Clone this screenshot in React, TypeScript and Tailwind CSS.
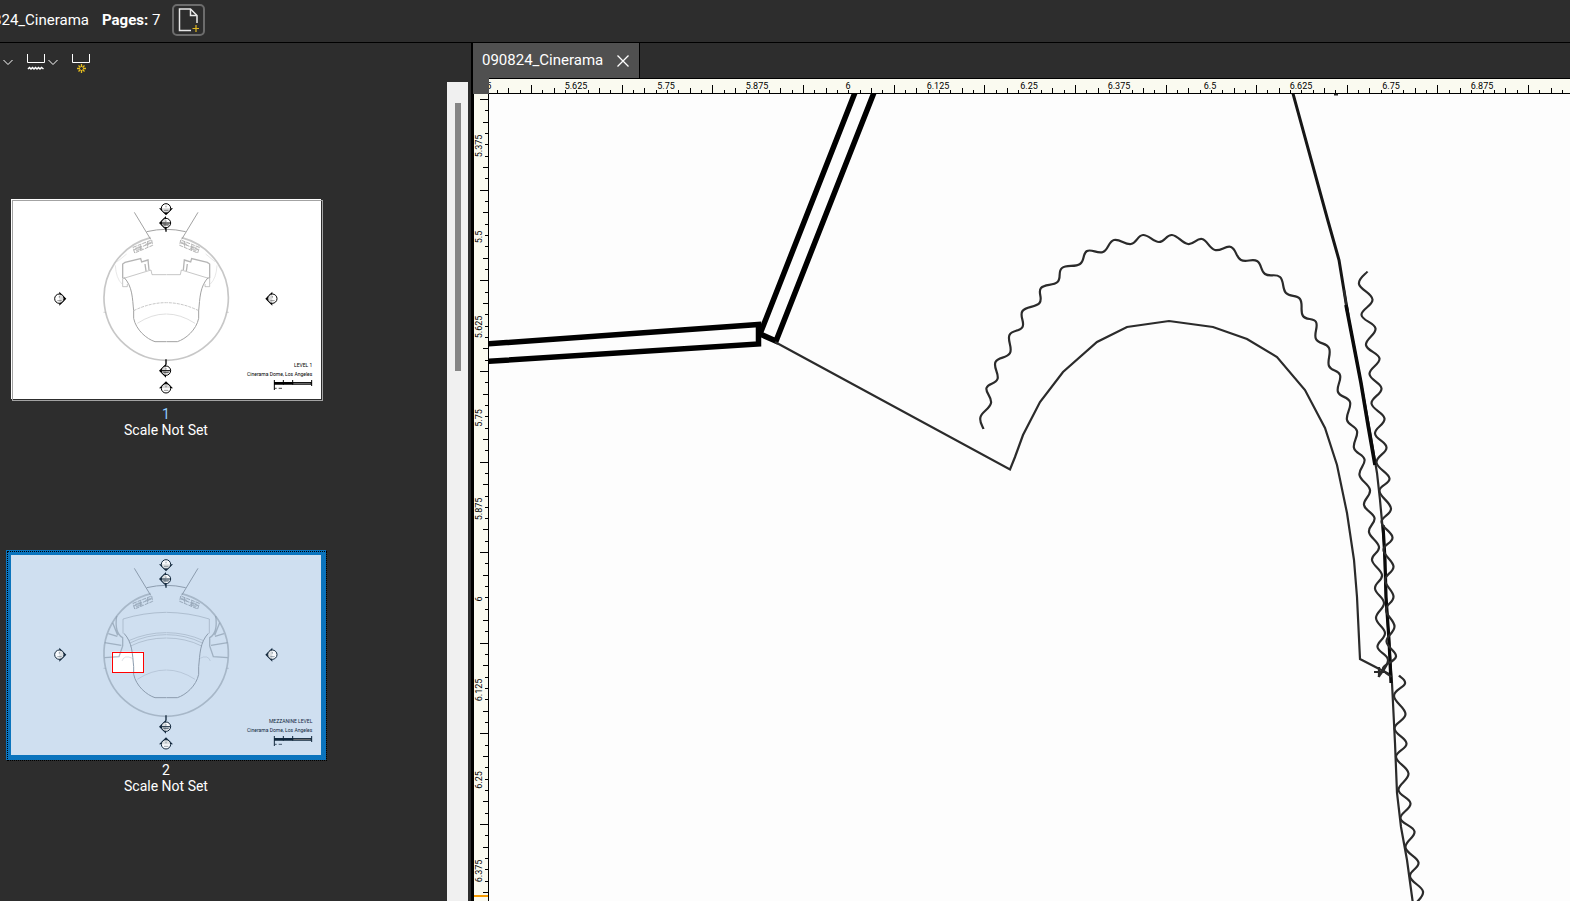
import type { ReactNode } from "react";

type Point = [number, number];

const LABEL_STEP = 90.63;

const arcWave: Point[] = [
	[983.5, 429], [980.5, 417], [991, 403], [986.5, 388], [997.5, 379], [995.5, 362], [1010, 353], [1009.5, 335],
	[1022.5, 327], [1022.5, 311], [1039.5, 303], [1041, 288], [1057.5, 282], [1062, 268], [1080, 264], [1087, 251],
	[1103, 252], [1114, 240], [1131, 244], [1143, 235], [1159, 242], [1172, 235], [1188, 244], [1202, 239],
	[1215, 250], [1231, 247], [1241, 260], [1257, 261], [1265, 274], [1280, 277], [1286, 293], [1300, 299],
	[1303, 316], [1316, 322], [1316, 339], [1329, 348], [1329, 366], [1340, 375], [1338, 392], [1350, 402],
	[1347, 420], [1357, 431], [1354, 448], [1364.5, 459.5], [1359.5, 475], [1370, 490], [1364, 505], [1374.5, 518],
	[1369, 532], [1379, 547], [1372, 560], [1382, 575], [1375, 588.5], [1384, 603], [1376, 618], [1385, 633],
	[1377.5, 647], [1388, 660], [1378.5, 677],
];

const sideWave: Point[] = [
	[1367.5, 271.5], [1359, 284], [1372.5, 299.5], [1361.5, 315], [1375.5, 328.5], [1366, 345], [1379.5, 358.5],
	[1369.5, 374], [1381.5, 388.5], [1371.5, 403.5], [1384.5, 418.5], [1375, 433.5], [1386.5, 447.5], [1376.5, 462.5],
	[1389.5, 478.5], [1379.5, 491], [1391, 508.5], [1381.5, 522], [1392.5, 537.5], [1383.5, 550], [1393.5, 566.5],
	[1385, 580], [1393.5, 596.5], [1386, 610], [1394.5, 626.5], [1386.5, 641.5], [1396, 656.5], [1383, 668],
	[1391.5, 677],
];

const lowerWave: Point[] = [
	[1399, 675.5], [1405, 683.5], [1394, 696], [1405.5, 714], [1394.5, 728.5], [1406.5, 743.5], [1396, 757],
	[1408.5, 773.5], [1398.5, 790], [1410.5, 803.5], [1400.5, 818.5], [1414.5, 831.5], [1405.5, 847.5],
	[1418.5, 862.5], [1410, 876.5], [1423, 891.5], [1415, 904],
];

function smoothPath(points: Point[]) {
	return points.reduce((d, [x, y], i) => {
		if (i === 0) return `M${x} ${y}`;
		const [px, py] = points[i - 1];
		const [bx, by] = points[i - 2] ?? points[i - 1];
		const [nx, ny] = points[i + 1] ?? points[i];
		const c1 = `${px + (x - bx) / 5} ${py + (y - by) / 5}`;
		const c2 = `${x - (nx - px) / 5} ${y - (ny - py) / 5}`;
		return `${d}C${c1} ${c2} ${x} ${y}`;
	}, "");
}

function tickLength(index: number) {
	if (index % 8 === 0) return 8;
	return index % 4 === 2 ? 5 : 3;
}

function ticks(origin: number, count: number) {
	return Array.from({ length: count }, (_, i) => ({
		pos: Math.floor(origin + (i * LABEL_STEP) / 8),
		length: tickLength(i),
	}));
}

function HorizontalRuler() {
	return (
		<div className="h-4 min-w-0 flex-1 overflow-hidden border-black border-y bg-[#fafaf0]">
			<svg className="h-full w-full" aria-hidden="true">
				{ticks(-48, 240).map(({ pos, length }) => (
					<rect key={pos} x={pos} y={14 - length} width="1" height={length} shapeRendering="crispEdges" />
				))}
				<g className="text-[9px]" textAnchor="middle">
					{Array.from({ length: 12 }, (_, i) => (
						<text key={i} x={Math.round(i * LABEL_STEP) - 4} y="10">
							{5.5 + i * 0.125}
						</text>
					))}
				</g>
			</svg>
		</div>
	);
}

function VerticalRuler() {
	return (
		<div className="w-[15px] flex-none overflow-hidden border-black border-r bg-[#fafaf0]">
			<svg className="h-full w-full" aria-hidden="true">
				{ticks(5.5, 120).map(({ pos, length }) => (
					<rect key={pos} x={14 - length} y={pos} width={length} height="1" shapeRendering="crispEdges" />
				))}
				<g className="text-[9px]" textAnchor="middle">
					{Array.from({ length: 9 }, (_, i) => (
						<text key={i} transform={`translate(8 ${Math.round(i * LABEL_STEP) + 52}) rotate(-90)`}>
							{5.375 + i * 0.125}
						</text>
					))}
				</g>
				<rect y="801" width="14" height="2" fill="#f59a00" />
			</svg>
		</div>
	);
}

function FloorPlan() {
	return (
		<svg
			className="block h-full w-full"
			viewBox="489 94 1081 807"
			preserveAspectRatio="xMinYMin slice"
			fill="none"
			stroke="#2b2b2b"
			strokeWidth="2.2"
			role="img"
			aria-label="Mezzanine floor plan"
		>
			<g stroke="#000" strokeWidth="5.5">
				<path d="M486 344L758.500 324.500V344L486 361.500" />
				<path d="M856 90L760 334L776 341L875 90" />
			</g>
			<path d="M775 342L1010 469.500L1015 457L1023 435L1040 402L1063 372L1097 342L1127 327L1169 321L1213 327L1247 339L1277 357L1305 390L1325 428L1337 465L1347 513L1354 560L1357 597L1360 659L1389 674" />
			{/* dome wall */}
			<path d="M1292 90L1328 221L1339 260L1348 315" stroke="#161616" strokeWidth="3" />
			<path d="M1344 290L1348 315L1361 383L1371 437L1377 473L1380 500L1384 543L1386 597L1388 627L1392 683L1395 743L1397 793L1401 827L1407 860L1413 904" />
			<path d="M1346 305L1361 383L1368 425L1375 465" stroke="#0a0a0a" strokeWidth="3.6" />
			<path d="M1383 525L1385 560L1386 597L1389 640L1391 683" stroke="#0a0a0a" strokeWidth="3.2" />
			<path d="M1379 667V677M1374 672H1384M1334 94.500H1338" />
			<path d={smoothPath(arcWave)} />
			<path d={smoothPath(sideWave)} />
			<path d={smoothPath(lowerWave)} />
		</svg>
	);
}

function SectionMark({ x, y, rotate, split }: { x: number; y: number; rotate: number; split?: boolean }) {
	return (
		<g transform={`translate(${x} ${y})`} stroke="currentColor">
			<path d="M-21 0L0 -21L21 0Z" fill="currentColor" stroke="none" transform={`rotate(${rotate})`} />
			<circle r="14" className="fill-white" strokeWidth="3" fillOpacity=".85" />
			<path d="M-6 6H7M0 -8V-3" strokeWidth="3" opacity=".4" />
			{split && <path d="M-14 0H14" strokeWidth="3" />}
			{split && <path d="M-10 5H10" strokeWidth="5" opacity=".4" />}
		</g>
	);
}

function HalfPlan({ mezzanine }: { mezzanine?: boolean }) {
	return (
		<>
			<path d="M403 67L452 148M440 125Q470 118 498 118" strokeWidth="3" />
			<path d="M452 143A187 187 0 0 0 498.500 511" strokeWidth="5" opacity=".6" />
			<g strokeWidth="3" opacity=".8">
				<path d="M399 172L455 150L458 166L404 189ZM401 180L456 158" strokeDasharray="12 3" />
				<path d="M405 176L424 169M408 182L427 175M436 164L455 157" strokeWidth="5" opacity=".7" />
				<path d="M422 166V180M443 156V170" />
			</g>
			<path d="M372 262C398 290 397 325 401 362V385C408 420 440 447 465 455H498" strokeWidth="3" />
			<path d="M412 400Q455 372 498 372M310 367h8" opacity=".35" strokeWidth="3" />
			{mezzanine ? (
				<>
					<path d="M498 199Q430 200 369 219V262" opacity=".5" strokeWidth="3" />
					<path d="M350 210C345 245 350 265 368 275V300L357 332L314 335M314 290L364 298M325 263L352 271M338 230L353 268" strokeWidth="4" opacity=".7" />
					<path d="M386 284Q440 260 498 260M390 291Q440 266 498 266M392 300Q440 276 498 276" opacity=".45" strokeWidth="3" />
					<path d="M366 345Q372 325 398 337" opacity=".3" strokeWidth="3" />
				</>
			) : (
				<>
					<path d="M368 265V222L375 217L422 206L425 216L444 210L447 240M435 222L438 243" strokeWidth="4" opacity=".8" />
					<path d="M368 266L453 240L456 254H498M368 266V290H382V282" strokeWidth="3" opacity=".6" />
					<path d="M346 226Q348 265 366 282M352 215L380 192" strokeWidth="3" opacity=".25" />
					<path d="M401 362Q450 338 498 338" strokeWidth="3" strokeDasharray="9 3" opacity=".6" />
				</>
			)}
		</>
	);
}

function PagePlan({ title, mezzanine }: { title: string; mezzanine?: boolean }) {
	return (
		<svg className="block h-[200px] w-[310px]" viewBox="33 27 930 600" fill="none" aria-hidden="true">
			{mezzanine && <rect x="335" y="317" width="96" height="62" fill="#fff" />}
			<g stroke={mezzanine ? "#8c9cae" : "#a2a2a2"}>
				<HalfPlan mezzanine={mezzanine} />
				<g transform="translate(997 0) scale(-1 1)">
					<HalfPlan mezzanine={mezzanine} />
				</g>
			</g>
			{mezzanine && <rect x="337.500" y="319.500" width="93" height="60" stroke="#f00" strokeWidth="3" />}
			<g className={mezzanine ? "text-[#12283d]" : "text-black"}>
				<path d="M498 112V125M498 508V524" stroke="currentColor" strokeWidth="4" />
				<SectionMark x={498} y={55} rotate={180} />
				<SectionMark x={498} y={99} rotate={270} split />
				<SectionMark x={178} y={326} rotate={90} />
				<SectionMark x={817} y={326} rotate={270} />
				<SectionMark x={498} y={542} rotate={270} split />
				<SectionMark x={498} y={595} rotate={0} />
				<g fill="currentColor" fontSize="15" textAnchor="end">
					<text x="937" y="531">
						{title}
					</text>
					<text x="937" y="558">
						Cinerama Dome, Los Angeles
					</text>
				</g>
				<path d="M822 580H935" stroke="currentColor" strokeWidth="8" />
				<path d="M823 570V600M850 570V584M878 570V584M935 570V588" stroke="currentColor" strokeWidth="3" />
				<path d="M824 595H830M836 595H846" stroke="currentColor" strokeWidth="4" opacity=".6" />
				<path d="M880 580H932" stroke="#777" strokeWidth="3" />
			</g>
		</svg>
	);
}

function Thumbnail({ page, selected, children }: { page: number; selected?: boolean; children: ReactNode }) {
	return (
		<li className="flex flex-col items-center">
			<button type="button" className={selected ? "relative bg-[#0b74bd] p-[5px]" : "relative p-[5px]"} aria-label={`Page ${page}`}>
				<div className={selected ? "bg-[#cfdff0]" : "bg-white"}>{children}</div>
				{selected ? (
					<span className="absolute -right-px -bottom-px top-px left-px border border-black border-dotted" />
				) : (
					<span className="absolute top-1.5 right-[3px] bottom-[3px] left-1.5 border border-[#a3a3a3]" />
				)}
			</button>
			<p className={selected ? "mt-0.5 text-[14px] leading-4" : "mt-0.5 text-[#8fcbff] text-[14px] leading-4"}>{page}</p>
			<p className="text-[14px] leading-4">Scale Not Set</p>
		</li>
	);
}

function Chevron() {
	return (
		<svg className="h-2 w-[10px]" viewBox="0 0 10 8" fill="none" stroke="#fff" aria-hidden="true">
			<path d="M.5 2L5 6.500L9.500 2" />
		</svg>
	);
}

function Sidebar() {
	return (
		<aside className="flex w-[471px] flex-none flex-col">
			<div className="flex h-[39px] flex-none items-center pb-0.5 pl-[3px]">
				<button type="button" aria-label="More page options">
					<Chevron />
				</button>
				<button type="button" className="ml-[14px] flex items-center gap-[3px]" aria-label="Line style">
					<svg className="h-[18px] w-[18px]" viewBox="0 0 18 18" fill="none" stroke="#fff" aria-hidden="true">
						<path d="M.5 1V9.500H17.500V1" />
						<path
							d="M1 16L2.500 14.500L4 16L5.500 14.500L7 16L8.500 14.500L10 16L11.500 14.500L13 16L14.500 14.500L16.500 16"
							strokeWidth="1.5"
						/>
					</svg>
					<Chevron />
				</button>
				<button type="button" className="ml-[14px]" aria-label="Highlight page">
					<svg className="h-[18px] w-[18px] overflow-visible" viewBox="0 0 18 18" fill="none" stroke="#fff" aria-hidden="true">
						<path d="M.5 1V9.500H17.500V1" />
						<path
							d="M9.500 11V14M9.500 17V20M5 15.500H8M11 15.500H14M6.500 12.500L8.500 14.500M12.500 12.500L10.500 14.500M6.500 18.500L8.500 16.500M12.500 18.500L10.500 16.500"
							stroke="#e6bd1e"
							strokeWidth="1.3"
						/>
					</svg>
				</button>
			</div>
			<div className="flex min-h-0 flex-1 justify-between pr-[3px]">
				<ul className="flex flex-col gap-[112px] overflow-hidden pt-[112px] pr-1 pl-[6px]">
					<Thumbnail page={1}>
						<PagePlan title="LEVEL 1" />
					</Thumbnail>
					<Thumbnail page={2} selected>
						<PagePlan title="MEZZANINE LEVEL" mezzanine />
					</Thumbnail>
				</ul>
				<div className="flex w-[21px] flex-none justify-center bg-[#f0f0f0] pt-[21px]">
					<div className="h-[268px] w-[6px] bg-[#858585]" />
				</div>
			</div>
		</aside>
	);
}

export default function App() {
	return (
		<div className="flex h-screen flex-col overflow-hidden bg-[#2d2d2d] font-[Roboto,sans-serif] text-white">
			<header className="flex h-[43px] flex-none items-center border-black border-b pb-0.5 text-[15px]">
				<div className="flex w-[89px] flex-none justify-end overflow-hidden">090824_Cinerama</div>
				<p className="ml-[13px]">
					<b>Pages:</b> 7
				</p>
				<button
					type="button"
					className="ml-[12px] flex h-8 w-[33px] items-center justify-center rounded-[5px] border-2 border-[#6c6c6c]"
					aria-label="Add page"
				>
					<svg className="h-6 w-[21px]" viewBox="0 0 21 24" fill="none" stroke="#e8e8e8" aria-hidden="true">
						<path d="M13 22.500H1.500V1H12.500L19 7.500V15" strokeWidth="1.5" />
						<path d="M12.500 1V7.500H19" strokeWidth="1.5" />
						<path d="M18 17V24M14.500 20.500H21.500" stroke="#e0b820" strokeWidth="1.2" />
					</svg>
				</button>
			</header>

			<div className="flex min-h-0 flex-1">
				<Sidebar />
				<main className="flex min-w-0 flex-1 flex-col border-black border-l-2">
					<div className="flex h-[35px] flex-none">
						<div className="flex items-center border-black border-r bg-[#505050] pr-[10px] pl-[9px] text-[15px]">
							<button type="button">090824_Cinerama</button>
							<button type="button" className="ml-[14px]" aria-label="Close tab">
								<svg className="h-3 w-3" viewBox="0 0 12 12" fill="none" stroke="#fff" strokeWidth="1.3" aria-hidden="true">
									<path d="M.5 .5L11.500 11.500M11.500 .5L.5 11.500" />
								</svg>
							</button>
						</div>
					</div>
					<div className="flex flex-none text-black">
						<div className="w-4 flex-none bg-[#505050]" />
						<HorizontalRuler />
					</div>
					<div className="flex min-h-0 flex-1 border-black border-l text-black">
						<VerticalRuler />
						<div className="min-w-0 flex-1 overflow-hidden bg-[#fdfdfd]">
							<FloorPlan />
						</div>
					</div>
				</main>
			</div>
		</div>
	);
}
